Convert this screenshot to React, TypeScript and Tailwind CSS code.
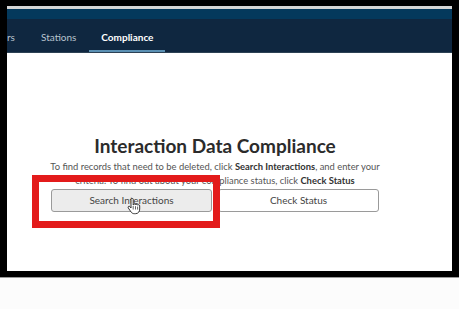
import React from "react";

function HandCursor() {
  return (
    <svg width="14" height="17" viewBox="0 0 14 17" className="absolute left-[127px] top-[198px]">
      <path
        d="M4 1.5c0-.8.5-1.2 1.1-1.2s1.1.4 1.1 1.2V7l.3-.1c.2-.7.6-1 1.1-1s.9.3 1 .9l.2.2c.2-.5.6-.7 1-.7.5 0 .9.4 1 .9.2-.3.5-.5.9-.5.6 0 1 .5 1 1.2V11c0 2.6-1.5 4.7-4.3 4.7H7.3c-1.4 0-2.4-.6-3.2-1.7L1.3 10c-.4-.6-.3-1.3.2-1.6.5-.3 1.1-.2 1.5.3L4 10V1.5z"
        fill="#ffffff"
        stroke="#222"
        strokeWidth="0.9"
        strokeLinejoin="round"
      />
      <path d="M6.2 8v3.5M8.5 8.2v3.3M10.6 8.6v3" stroke="#222" strokeWidth="0.7" />
    </svg>
  );
}

export default function App() {
  return (
    <div
      className="relative w-[459px] h-[309px] overflow-hidden bg-[#fcfcfc]"
      style={{ fontFamily: "Lato, 'Open Sans', sans-serif" }}
    >
      <div className="h-[277px] flex flex-col border-x-[7px] border-t-[6px] border-b-[6px] border-black bg-white">
        <div className="h-[3px] bg-[#d6d6d6]" />
        <div className="h-[10px] bg-[#04395c]" />
        <div className="h-[34px] bg-[#0f2740] flex items-stretch border-b border-[#2c4154] text-[10px]">
          <div className="flex items-center pt-[4px] text-[#b8c4ce]">
            <span>rs</span>
            <span className="ml-[26px]">Stations</span>
          </div>
          <div className="ml-[13px] w-[76px] flex items-center justify-center font-bold text-white border-b-[2px] border-[#5a90b3] pt-[5px]">
            Compliance
          </div>
        </div>
        <div className="flex-1 flex flex-col items-center pt-[81px] pr-[29px]">
          <h1 className="text-[19px] leading-[24px] font-bold text-[#2b2b2b]">Interaction Data Compliance</h1>
          <p className="mt-[2px] text-[9.4px] leading-[14px] text-[#555] text-center whitespace-nowrap">
            To find records that need to be deleted, click <b className="text-[#333]">Search Interactions</b>, and
            enter your
            <br />
            criteria. To find out about your compliance status, click <b className="text-[#333]">Check Status</b>
          </p>
          <div className="mt-[1px] flex gap-[6px]">
            <button className="w-[161px] h-[23px] rounded-[3px] border border-[#9a9a9a] bg-[#ececec] text-[10px] text-[#444]">
              Search Interactions
            </button>
            <button className="w-[161px] h-[23px] rounded-[3px] border border-[#9a9a9a] bg-white text-[10px] text-[#444]">
              Check Status
            </button>
          </div>
        </div>
      </div>
      <div className="h-[1px] bg-[#9a9a9a]" />
      <div className="absolute left-[32px] top-[175px] w-[188px] h-[53px] border-[7px] border-[#e31b1b]" />
      <HandCursor />
    </div>
  );
}
